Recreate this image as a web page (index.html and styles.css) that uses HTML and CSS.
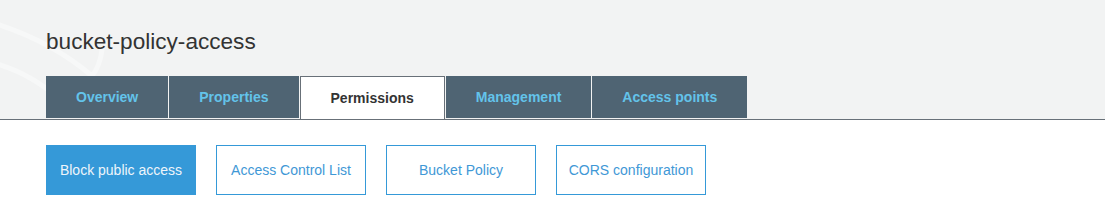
FILE: index.html
```html
<!DOCTYPE html>
<html lang="en">
<head>
    <meta charset="UTF-8">
    <meta name="viewport" content="width=device-width, initial-scale=1.0">
    <title>bucket-policy-access</title>
    <link rel="stylesheet" href="styles.css">
</head>
<body>
    <div class="header">
        <svg class="deco" width="140" height="119" viewBox="0 0 140 119">
            <path d="M -10 22 Q 50 40 92 76 Q 100 66 102 50" />
            <path d="M -10 62 Q 30 72 60 100" />
        </svg>
        <h1 class="title">bucket-policy-access</h1>
        <div class="tabs">
            <div class="tab">Overview</div>
            <div class="tab">Properties</div>
            <div class="tab active">Permissions</div>
            <div class="tab">Management</div>
            <div class="tab">Access points</div>
        </div>
    </div>
    <div class="subnav">
        <button class="btn selected">Block public access</button>
        <button class="btn">Access Control List</button>
        <button class="btn">Bucket Policy</button>
        <button class="btn">CORS configuration</button>
    </div>
</body>
</html>
```

FILE: styles.css
```css
body {
    margin: 0;
    font-family: "Liberation Sans", Arial, sans-serif;
    background: #fff;
}
.header {
    position: relative;
    background-color: #f2f3f3;
    border-bottom: 1px solid #687078;
    padding: 0 46px;
    height: 119px;
    box-sizing: content-box;
    overflow: hidden;
}
.deco {
    position: absolute;
    left: 0;
    top: 0;
    pointer-events: none;
}
.deco path {
    fill: none;
    stroke: #f7f8f8;
    stroke-width: 5;
    stroke-linecap: round;
}
.title {
    position: relative;
    margin: 0;
    padding-top: 29px;
    font-size: 22.6px;
    line-height: 26px;
    font-weight: normal;
    color: #333;
}
.tabs {
    position: relative;
    display: flex;
    align-items: flex-end;
    gap: 1px;
    margin-top: 21px;
}
.tab {
    height: 42px;
    line-height: 42px;
    padding: 0 30px;
    margin-bottom: 1px;
    background-color: #4f6473;
    color: #63c3ea;
    font-size: 14px;
    font-weight: bold;
    box-sizing: border-box;
}
.tab.active {
    height: 44px;
    line-height: 42px;
    margin-bottom: -1px;
    background-color: #fff;
    color: #333;
    border: 1px solid #687078;
    border-bottom: none;
}
.subnav {
    display: flex;
    gap: 20px;
    padding: 25px 46px 0;
}
.btn {
    width: 150px;
    height: 50px;
    padding: 0;
    background: #fff;
    border: 1px solid #3599d8;
    color: #3f98d6;
    font-family: "Liberation Sans", Arial, sans-serif;
    font-size: 14px;
    cursor: pointer;
}
.btn.selected {
    background-color: #3599d8;
    color: #eef5fb;
}
```
